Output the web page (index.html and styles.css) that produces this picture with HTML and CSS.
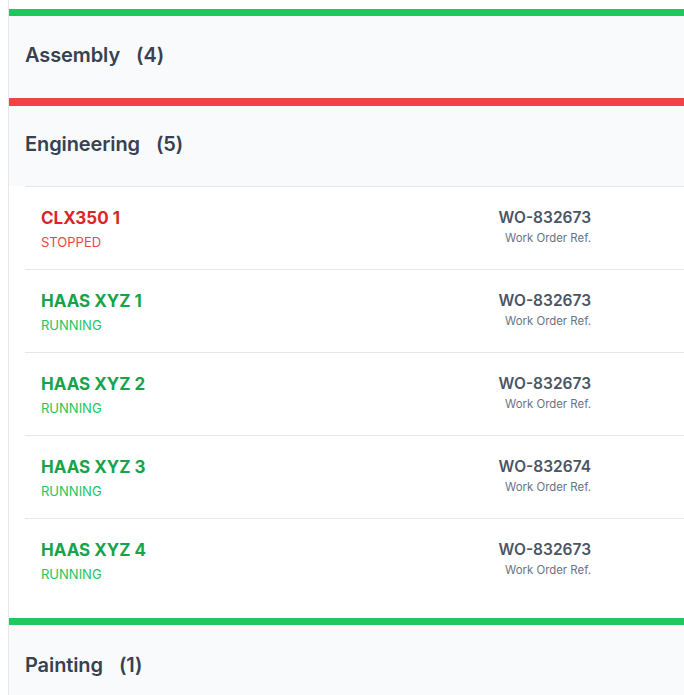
FILE: index.html
```html
<!DOCTYPE html>
<html>
<head>
<meta charset="utf-8">
<link rel="stylesheet" href="styles.css">
</head>
<body>
<div class="board">
  <section class="group group--ok">
    <div class="group-head group-head--collapsed">Assembly<span class="count">(4)</span></div>
  </section>
  <section class="group group--bad">
    <div class="group-head group-head--open">Engineering<span class="count">(5)</span></div>
    <div class="list">
      <div class="row">
        <div class="machine"><div class="name name--bad">CLX350 1</div><div class="status status--bad">STOPPED</div></div>
        <div class="wo"><div class="wo-num">WO-832673</div><div class="wo-label">Work Order Ref.</div></div>
      </div>
      <div class="row">
        <div class="machine"><div class="name name--ok">HAAS XYZ 1</div><div class="status status--ok">RUNNING</div></div>
        <div class="wo"><div class="wo-num">WO-832673</div><div class="wo-label">Work Order Ref.</div></div>
      </div>
      <div class="row">
        <div class="machine"><div class="name name--ok">HAAS XYZ 2</div><div class="status status--ok">RUNNING</div></div>
        <div class="wo"><div class="wo-num">WO-832673</div><div class="wo-label">Work Order Ref.</div></div>
      </div>
      <div class="row">
        <div class="machine"><div class="name name--ok">HAAS XYZ 3</div><div class="status status--ok">RUNNING</div></div>
        <div class="wo"><div class="wo-num">WO-832674</div><div class="wo-label">Work Order Ref.</div></div>
      </div>
      <div class="row">
        <div class="machine"><div class="name name--ok">HAAS XYZ 4</div><div class="status status--ok">RUNNING</div></div>
        <div class="wo"><div class="wo-num">WO-832673</div><div class="wo-label">Work Order Ref.</div></div>
      </div>
    </div>
  </section>
  <section class="group group--ok">
    <div class="group-head">Painting<span class="count">(1)</span></div>
  </section>
</div>
</body>
</html>
```

FILE: styles.css
```css
html, body {
  margin: 0;
  padding: 0;
  background: #ffffff;
}
body {
  font-family: Inter, "Noto Sans", Arial, sans-serif;
  overflow: hidden;
  height: 695px;
}
.board {
  margin-left: 8px;
  border-left: 1px solid #e5e7eb;
  padding-top: 9px;
  min-height: 700px;
}
.group {
  border-top: 7px solid #22c55e;
}
.group--bad {
  border-top: 8px solid #ef4444;
}
.group-head {
  background: #f8fafc;
  padding: 28px 16px;
  font-size: 20px;
  line-height: 24px;
  font-weight: 600;
  color: #374151;
  letter-spacing: -0.1px;
}
.group-head--collapsed {
  padding-top: 27px;
  padding-bottom: 31px;
}
.group-head--open {
  padding-top: 26px;
  padding-bottom: 30px;
}
.count {
  margin-left: 16px;
}
.list {
  background: #ffffff;
  padding: 0 0 17px 16px;
}
.row {
  border-top: 1px solid #e5e7eb;
  display: grid;
  grid-template-columns: 1fr auto;
  padding: 19px 93px 16px 16px;
}
.name {
  font-size: 17px;
  line-height: 24px;
  font-weight: 700;
}
.name--bad { color: #dc2626; }
.name--ok { color: #16a34a; }
.status {
  margin-top: 1px;
  font-size: 13px;
  line-height: 22px;
}
.status--bad { color: #ef4444; }
.status--ok { color: #22c55e; }
.wo {
  text-align: right;
}
.wo-num {
  font-size: 15.5px;
  line-height: 24px;
  font-weight: 600;
  color: #4b5563;
}
.wo-label {
  font-size: 11.4px;
  line-height: 16px;
  color: #6b7280;
}
```
